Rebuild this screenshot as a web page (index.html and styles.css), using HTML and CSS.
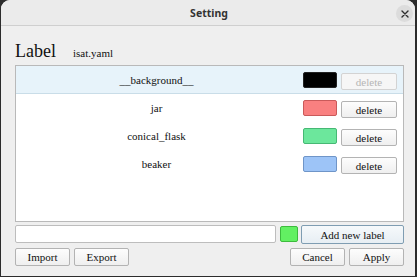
FILE: index.html
```html
<!DOCTYPE html>
<html>
<head>
  <title>Setting</title>
  <meta name="viewport" content="width=device-width, initial-scale=1.0">
  <link rel="stylesheet" href="styles.css">
</head>
<body>
  <div class="window">
    <div class="titlebar">
      <span class="title">Setting</span>
      <span class="close">
        <svg width="8" height="8" viewBox="0 0 8 8"><path d="M1 1 L7 7 M7 1 L1 7" stroke="#2e2e2e" stroke-width="1.4" stroke-linecap="round"/></svg>
      </span>
    </div>

    <div class="content">
      <div class="header">
        <span class="heading">Label</span>
        <span class="file">isat.yaml</span>
      </div>

      <div class="list">
        <div class="row selected">
          <span class="name">__background__</span>
          <span class="swatch" style="background:#000000;border-color:#222"></span>
          <button class="btn small" disabled>delete</button>
        </div>
        <div class="row">
          <span class="name">jar</span>
          <span class="swatch" style="background:#f98080;border-color:#c95a5a"></span>
          <button class="btn small">delete</button>
        </div>
        <div class="row">
          <span class="name">conical_flask</span>
          <span class="swatch" style="background:#6ce79c;border-color:#46b874"></span>
          <button class="btn small">delete</button>
        </div>
        <div class="row">
          <span class="name">beaker</span>
          <span class="swatch" style="background:#9dc4f7;border-color:#6f95c8"></span>
          <button class="btn small">delete</button>
        </div>
      </div>

      <div class="add-row">
        <input type="text" class="new-label">
        <span class="new-color"></span>
        <button class="btn add">Add new label</button>
      </div>

      <div class="actions">
        <div class="group">
          <button class="btn">Import</button>
          <button class="btn">Export</button>
        </div>
        <div class="group">
          <button class="btn">Cancel</button>
          <button class="btn">Apply</button>
        </div>
      </div>
    </div>
  </div>
</body>
</html>
```

FILE: styles.css
```css
body {
  margin: 0;
  background-color: #2c2c2c;
  font-family: "Liberation Serif", serif;
  color: #111;
}

.window {
  margin-left: 1px;
  width: 414px;
  height: 276px;
  background-color: #efefef;
  border-radius: 9px 9px 0 0;
  overflow: hidden;
  display: flex;
  flex-direction: column;
}

.titlebar {
  position: relative;
  height: 25px;
  border-bottom: 1px solid #cfcfcf;
  background-color: #ebebeb;
  display: flex;
  align-items: center;
  justify-content: center;
}

.title {
  font-family: "Noto Sans", sans-serif;
  font-weight: bold;
  font-size: 10.5px;
  color: #333;
  margin-left: 2px;
}

.close {
  position: absolute;
  right: 2px;
  top: 5px;
  width: 17px;
  height: 17px;
  border-radius: 50%;
  background-color: #dcdcdc;
  display: flex;
  align-items: center;
  justify-content: center;
}

.content {
  padding: 14px 11px 0 14px;
  display: flex;
  flex-direction: column;
}

.header {
  height: 22px;
  line-height: 22px;
  display: flex;
  align-items: baseline;
  gap: 17px;
}

.heading {
  font-size: 18px;
}

.file {
  font-size: 11px;
}

.list {
  margin-top: 3px;
  height: 157px;
  box-sizing: border-box;
  border: 1px solid #b9b9b9;
  background-color: #fff;
}

.row {
  height: 28px;
  box-sizing: border-box;
  display: flex;
  align-items: flex-start;
  padding: 6px 6px 0 0;
}

.row.selected {
  background-color: #e7f3fa;
  border-bottom: 1px solid #c9dde8;
}

.name {
  flex: 1;
  text-align: center;
  font-size: 11px;
  line-height: 16px;
  padding-right: 6px;
}

.swatch {
  width: 34px;
  height: 16px;
  box-sizing: border-box;
  border: 1px solid #222;
  border-radius: 2px;
  margin-right: 4px;
}

.btn {
  font-family: "Liberation Serif", serif;
  font-size: 11px;
  color: #111;
  height: 18px;
  width: 56px;
  padding: 0;
  box-sizing: border-box;
  border: 1px solid #b3b3b3;
  border-radius: 2px;
  background: linear-gradient(#fdfdfd, #efefef);
}

.btn.small {
  height: 17px;
  margin-top: 1px;
}

.btn:disabled {
  color: #b5b5b5;
  border-color: #d3d3d3;
  background: #f6f6f6;
}

.add-row {
  margin-top: 3px;
  height: 19px;
  display: flex;
  align-items: flex-start;
}

.new-label {
  width: 261px;
  height: 18px;
  box-sizing: border-box;
  margin: 0;
  border: 1px solid #bdbdbd;
  border-radius: 2px;
  background-color: #fff;
}

.new-color {
  width: 18px;
  height: 16px;
  margin: 1px 0 0 4px;
  box-sizing: border-box;
  border: 1px solid #3dbb3d;
  border-radius: 2px;
  background-color: #62f062;
}

.btn.add {
  width: 103px;
  height: 19px;
  margin-left: 3px;
  border-color: #7f9db2;
  background: linear-gradient(#f6f9fb, #e7eef3);
}

.actions {
  margin-top: 4px;
  display: flex;
  justify-content: space-between;
}

.group {
  display: flex;
  gap: 4px;
}

.group .btn {
  width: 55px;
}
```
